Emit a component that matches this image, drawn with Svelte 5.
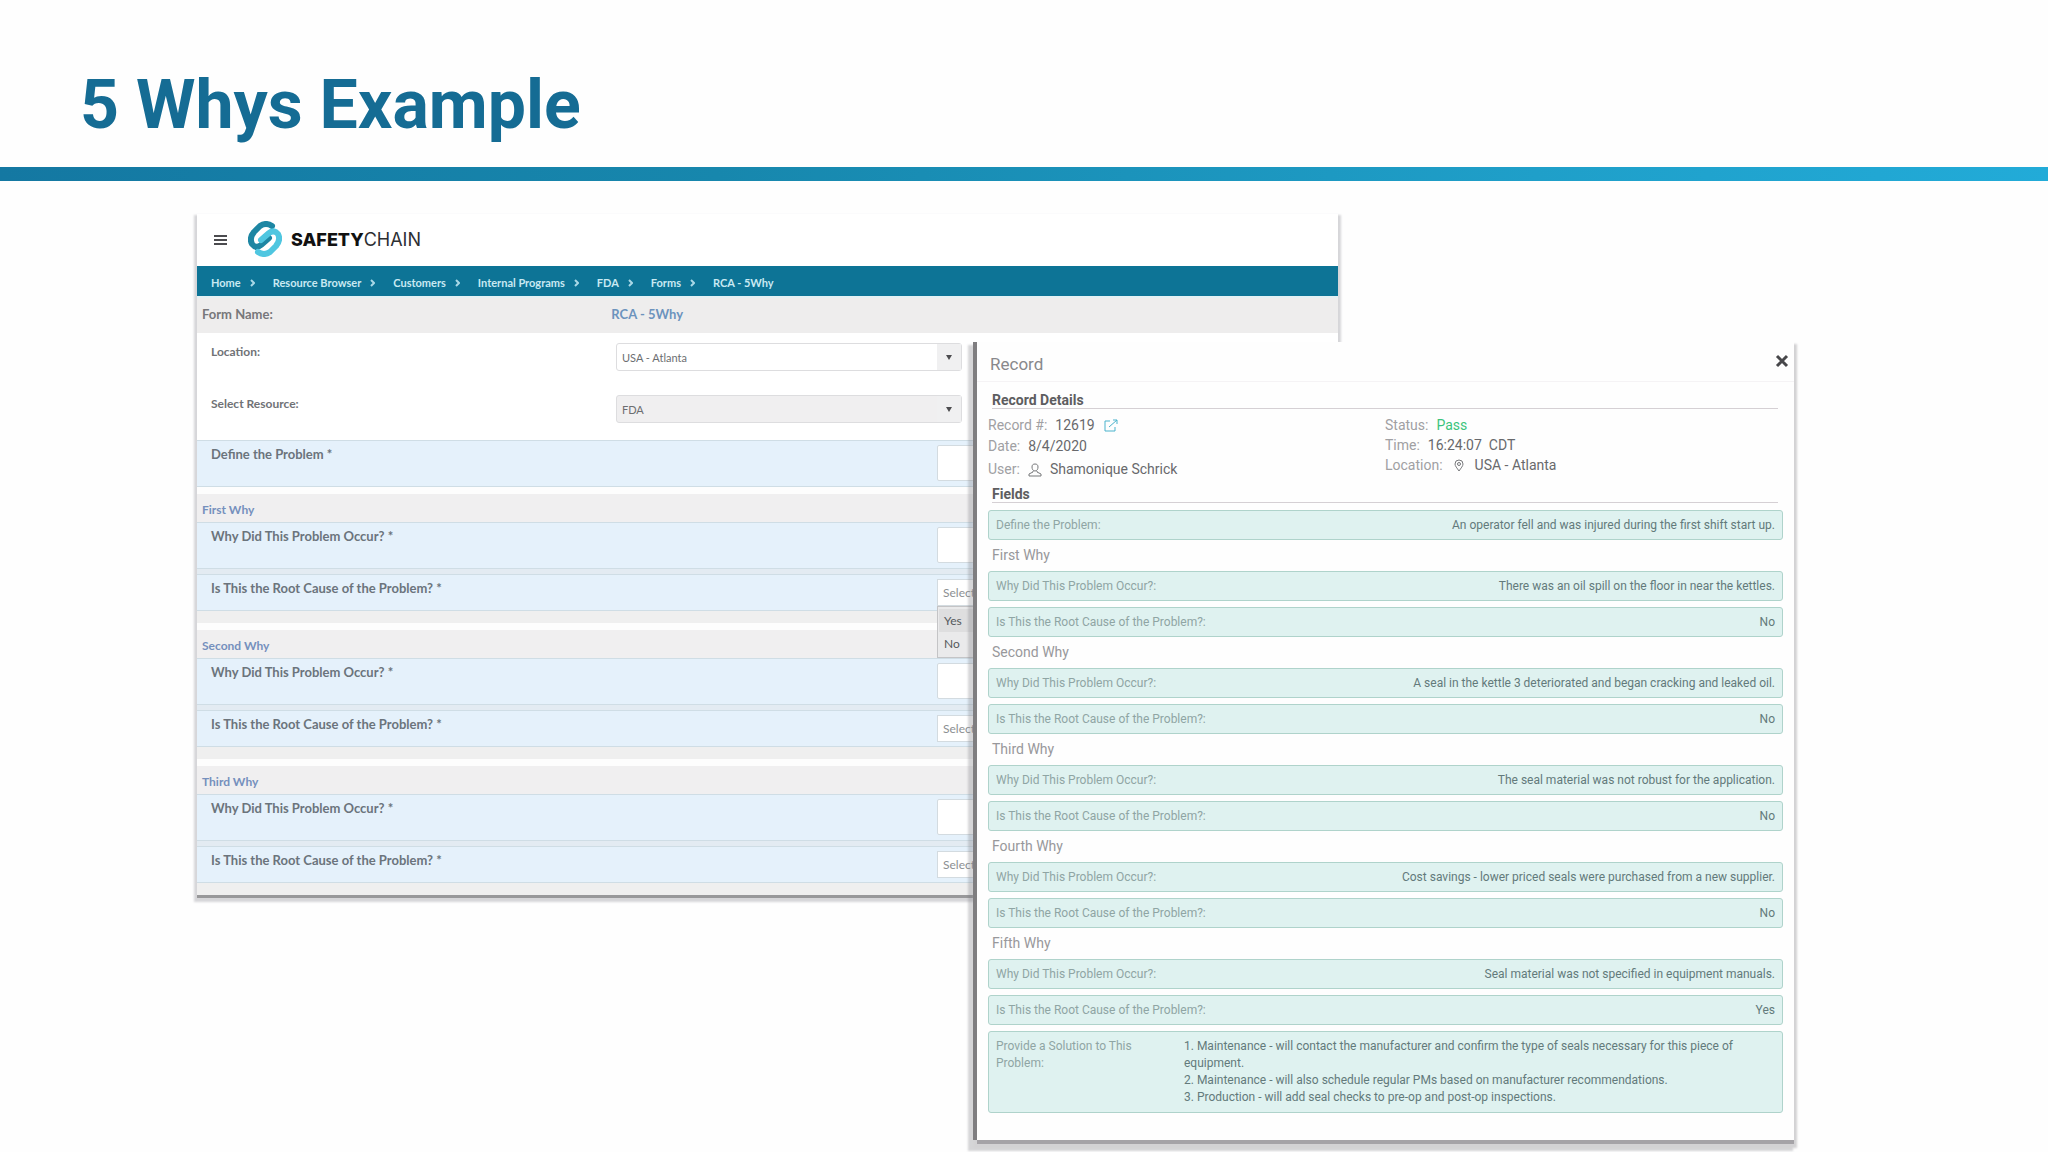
<script lang="ts">
    const crumbs = ['Home', 'Resource Browser', 'Customers', 'Internal Programs', 'FDA', 'Forms', 'RCA - 5Why'];

    const whys = [
        { title: 'First Why', open: true },
        { title: 'Second Why', open: false },
        { title: 'Third Why', open: false },
    ];

    const answers = [
        { title: 'First Why', reason: 'There was an oil spill on the floor in near the kettles.', root: 'No' },
        { title: 'Second Why', reason: 'A seal in the kettle 3 deteriorated and began cracking and leaked oil.', root: 'No' },
        { title: 'Third Why', reason: 'The seal material was not robust for the application.', root: 'No' },
        { title: 'Fourth Why', reason: 'Cost savings - lower priced seals were purchased from a new supplier.', root: 'No' },
        { title: 'Fifth Why', reason: 'Seal material was not specified in equipment manuals.', root: 'Yes' },
    ];
</script>

<main class="slide">
    <h1>5 Whys Example</h1>
    <div class="rule"></div>

    <div class="stage">
        <section class="form-panel">
            <header class="brand">
                <button class="menu" aria-label="Menu"><span></span><span></span><span></span></button>
                <svg class="logo" viewBox="0 0 34 36" fill="none" stroke-width="6" stroke-linecap="round" stroke-linejoin="round" aria-hidden="true">
                    <path stroke="#1d86a3" d="M24 5 Q18 1 12 5 L6 11 Q1 17 4 23 Q8 28 13 24 L21 17" />
                    <path stroke="#4fc6e0" d="M10 31 Q16 35 22 31 L28 25 Q33 19 30 13 Q26 8 21 12 L13 19" />
                </svg>
                <span class="wordmark"><b>SAFETY</b>CHAIN</span>
            </header>

            <nav aria-label="Breadcrumb">
                {#each crumbs as crumb, i}
                    <a href="#{i}">{crumb}</a>
                    {#if i < crumbs.length - 1}
                        <svg class="chevron" viewBox="0 0 5 8" aria-hidden="true"><path d="M1 1l3 3-3 3" /></svg>
                    {/if}
                {/each}
            </nav>

            <div class="form-name">
                <span>Form Name:</span>
                <a href="#form">RCA - 5Why</a>
            </div>

            <div class="pickers">
                <div class="picker">
                    <label for="location">Location:</label>
                    <div class="combo">
                        <select id="location"><option>USA - Atlanta</option></select>
                        <span class="arrow"></span>
                    </div>
                </div>
                <div class="picker">
                    <label for="resource">Select Resource:</label>
                    <div class="combo filled">
                        <select id="resource"><option>FDA</option></select>
                        <span class="arrow"></span>
                    </div>
                </div>
            </div>

            <div class="question tall">
                <label for="problem">Define the Problem *</label>
                <textarea id="problem"></textarea>
            </div>

            {#each whys as why, i}
                <h2>{why.title}</h2>
                <div class="question tall">
                    <label for="why-{i}">Why Did This Problem Occur? *</label>
                    <textarea id="why-{i}"></textarea>
                </div>
                <div class="spacer"></div>
                <div class="question">
                    <label for="root-{i}">Is This the Root Cause of the Problem? *</label>
                    <div class="answer">
                        <select id="root-{i}"><option>Select</option></select>
                        {#if why.open}
                            <ul class="options">
                                <li class="active">Yes</li>
                                <li>No</li>
                            </ul>
                        {/if}
                    </div>
                </div>
                <div class="footer"></div>
            {/each}
        </section>

        <section class="record">
            <header>
                <h2>Record</h2>
                <button class="close" aria-label="Close">
                    <svg viewBox="0 0 14 14"><path d="M2 2l10 10M12 2L2 12" /></svg>
                </button>
            </header>

            <div class="body">
                <h3>Record Details</h3>
                <div class="details">
                    <div class="left">
                        <p>Record #: <b>12619</b>
                            <svg class="edit" viewBox="0 0 16 14" aria-hidden="true"><path d="M7 2H2v10h10V8M6 8l8-7M10 1h4v4" /></svg>
                        </p>
                        <p>Date: <b>8/4/2020</b></p>
                        <p>User:
                            <svg class="user" viewBox="0 0 14 14" aria-hidden="true"><path d="M7 1c2 0 3 1 3 3s-1 4-3 4-3-2-3-4 1-3 3-3zM5 8v1l-4 2v2h12v-2l-4-2V8" /></svg>
                            <b>Shamonique Schrick</b>
                        </p>
                    </div>
                    <div class="right">
                        <p>Status: <b class="pass">Pass</b></p>
                        <p>Time: <b>16:24:07&nbsp; CDT</b></p>
                        <p>Location:
                            <svg class="pin" viewBox="0 0 10 13" aria-hidden="true"><path d="M5 12C3 9 1 7 1 5a4 4 0 0 1 8 0c0 2-2 4-4 7z" /><circle cx="5" cy="5" r="1.5" /></svg>
                            <b>USA - Atlanta</b>
                        </p>
                    </div>
                </div>

                <h3>Fields</h3>
                <div class="fields">
                    <div class="field">
                        <span>Define the Problem:</span>
                        <b>An operator fell and was injured during the first shift start up.</b>
                    </div>
                    {#each answers as answer}
                        <h4>{answer.title}</h4>
                        <div class="field">
                            <span>Why Did This Problem Occur?:</span>
                            <b>{answer.reason}</b>
                        </div>
                        <div class="field">
                            <span>Is This the Root Cause of the Problem?:</span>
                            <b>{answer.root}</b>
                        </div>
                    {/each}
                    <div class="field solution">
                        <span>Provide a Solution to This Problem:</span>
                        <div>
                            1. Maintenance - will contact the manufacturer and confirm the type of seals necessary for this piece of equipment.<br />
                            2. Maintenance - will also schedule regular PMs based on manufacturer recommendations.<br />
                            3. Production - will add seal checks to pre-op and post-op inspections.
                        </div>
                    </div>
                </div>
            </div>
        </section>
    </div>
</main>

<style>
    :global(body) {
        margin: 0;
        background: #fefefe;
    }
    .slide, .slide * {
        box-sizing: border-box;
    }
    .slide {
        font-family: Roboto, "Liberation Sans", sans-serif;
        color: #55595c;
    }
    h1 {
        margin: 0;
        padding: 65px 80px 22px;
        font-size: 68px;
        line-height: 80px;
        font-weight: 700;
        color: #156c94;
    }
    .rule {
        height: 14px;
        background: linear-gradient(90deg, #1478a2, #1787ad 35%, #1f9fc9 75%, #22abd8);
    }
    h2, h3, h4, p {
        margin: 0;
    }
    a {
        color: inherit;
        text-decoration: none;
    }

    /* both windows share the middle column so the record overlaps the form */
    .stage {
        display: grid;
        grid-template-columns: minmax(0, 197fr) minmax(0, 780fr) minmax(0, 361fr) minmax(0, 456fr) minmax(0, 254fr);
        grid-template-rows: 128px auto;
        padding: 33px 0 12px;
    }
    .form-panel {
        grid-column: 2 / 4;
        grid-row: 1 / 3;
        align-self: start;
        background: #fff;
        box-shadow: 0 3px 0 #98989a, 0 4px 2px 3px #d6d6d9;
        font-family: Lato, "Noto Sans", sans-serif;
    }
    .brand {
        display: flex;
        align-items: center;
        height: 52px;
        padding: 0 17px;
        background: #fff;
    }
    .menu {
        display: flex;
        flex-direction: column;
        gap: 2px;
        width: 13px;
        margin-right: 21px;
        padding: 0;
        border: 0;
        background: none;
    }
    .menu span {
        height: 2px;
        background: #4c4c4f;
    }
    .logo {
        width: 34px;
        height: 36px;
        margin: 0 9px 2px 0;
    }
    .wordmark {
        font-family: Inter, sans-serif;
        font-size: 18px;
        line-height: 20px;
        color: #2d2f33;
    }
    .wordmark b {
        font-weight: 800;
        color: #111;
    }
    nav {
        display: flex;
        align-items: center;
        height: 30px;
        padding: 3px 14px 0;
        background: #0d7496;
        color: #c9e9f2;
        font-size: 11px;
        font-weight: 700;
    }
    .chevron {
        width: 5px;
        height: 8px;
        margin: 0 18px 0 9px;
        fill: none;
        stroke: #a9d8e6;
        stroke-width: 2;
    }
    .form-name {
        display: grid;
        grid-template-columns: 409fr 721fr;
        height: 37px;
        padding: 8px 5px;
        border-top: 2px solid #e3f1f4;
        background: #eeeded;
        font-size: 13px;
        line-height: 16px;
        font-weight: 700;
        color: #77777a;
    }
    .form-name a {
        color: #6c93bd;
    }
    .pickers {
        display: grid;
        gap: 24px;
        padding: 10px 14px 17px;
        background: #fff;
    }
    .picker {
        display: grid;
        grid-template-columns: minmax(0, 405fr) minmax(0, 346fr) minmax(0, 362fr);
        font-size: 12px;
        color: #707276;
    }
    .picker label {
        font-weight: 700;
        line-height: 18px;
    }
    .combo {
        display: flex;
        height: 28px;
        border: 1px solid #dddddf;
        border-radius: 3px;
        background: #fff;
    }
    .combo select {
        flex: 1;
        padding: 1px 5px 0;
        border: 0;
        background: none;
        appearance: none;
        font: 11px Lato, sans-serif;
        color: #6c6e71;
    }
    .arrow {
        display: grid;
        place-items: center;
        width: 24px;
        background: #f0f0f1;
    }
    .arrow::after {
        content: "";
        border: 3px solid transparent;
        border-top: 5px solid #4c4c4f;
        border-bottom: 0;
    }
    .filled {
        background: #f0eff0;
    }
    .form-panel h2 {
        height: 35px;
        padding: 9px 5px 0;
        border-top: 7px solid #fdfdfd;
        background: #f0eff0;
        font-size: 12px;
        line-height: 14px;
        font-weight: 700;
        color: #7590bd;
    }
    .question {
        display: grid;
        grid-template-columns: minmax(0, 726fr) minmax(0, 387fr);
        height: 37px;
        padding: 4px 14px 0;
        border: solid #cfdde5;
        border-width: 1px 0;
        background: #e5f1fb;
    }
    .question label {
        font-size: 13px;
        line-height: 18px;
        font-weight: 700;
        color: #6b747c;
    }
    .tall {
        height: 47px;
    }
    .question textarea {
        height: 36px;
        border: 1px solid #d3dbe0;
        border-radius: 2px;
        resize: none;
        background: #fff;
    }
    .spacer {
        height: 5px;
        background: #e3ebf2;
    }
    .answer {
        position: relative;
    }
    .answer select {
        width: 100%;
        height: 27px;
        padding: 0 5px;
        border: 1px solid #d3dbe0;
        background: #fff;
        appearance: none;
        font: 12px Lato, sans-serif;
        color: #8c8f92;
    }
    .options {
        position: absolute;
        top: 27px;
        left: 0;
        width: 100%;
        margin: 0;
        padding: 2px 1px;
        border: 1px solid #c4c4c6;
        background: #eaeaeb;
        list-style: none;
        font-size: 12px;
        line-height: 23px;
    }
    .options li {
        padding: 0 5px;
    }
    .options .active {
        background: #dededf;
    }
    .footer {
        height: 12px;
        background: #efefef;
    }

    .record {
        grid-column: 3 / 5;
        grid-row: 2;
        z-index: 1;
        background: #fefefe;
        box-shadow: -4px 0 0 #7f7e80, 0 4px 0 #a5a3a7, 0 5px 2px 3px #d3d2d4, -5px 7px 2px 4px rgba(120, 120, 125, 0.3);
    }
    .record > header {
        display: flex;
        justify-content: space-between;
        height: 40px;
        padding: 12px 5px 0 13px;
        border-bottom: 1px solid #f5f3f5;
    }
    .record h2 {
        font-size: 17px;
        line-height: 20px;
        font-weight: 400;
        color: #88888b;
    }
    .close {
        width: 14px;
        height: 14px;
        padding: 0;
        border: 0;
        background: none;
    }
    .close svg {
        display: block;
        fill: none;
        stroke: #47474a;
        stroke-width: 3;
    }
    .body {
        padding: 10px 11px 27px;
    }
    h3 {
        height: 17px;
        margin: 0 5px 0 4px;
        border-bottom: 1px solid #d5d0d4;
        font-size: 14px;
        line-height: 16px;
        font-weight: 700;
        color: #5d5d60;
    }
    .details {
        display: grid;
        grid-template-columns: minmax(0, 397fr) minmax(0, 398fr);
        height: 77px;
        padding-top: 6px;
        font-size: 14px;
        line-height: 21px;
        color: #a0a0a3;
    }
    .details p {
        display: flex;
        align-items: center;
        gap: 8px;
    }
    .details b, .field b {
        font-weight: 400;
        color: #68696c;
    }
    .details .pass {
        color: #3cc47c;
    }
    .details svg {
        fill: none;
        stroke: #77787b;
    }
    .left p:last-child {
        padding-top: 2px;
    }
    .right {
        line-height: 20px;
    }
    .edit {
        width: 16px;
        height: 14px;
    }
    .details .edit path {
        stroke: #4bb3cc;
    }
    .user {
        width: 14px;
        height: 14px;
    }
    .pin {
        width: 10px;
        height: 13px;
        margin: 0 3px;
    }
    .fields {
        display: grid;
        gap: 6px;
        padding-top: 7px;
        font-size: 12px;
    }
    h4 {
        height: 19px;
        padding: 0 4px;
        font-size: 14px;
        line-height: 18px;
        font-weight: 400;
        color: #98989b;
    }
    .field {
        display: flex;
        justify-content: space-between;
        padding: 6px 7px 5px;
        border: 1px solid #afd3cb;
        border-radius: 3px;
        background: #dff2f0;
        line-height: 17px;
        color: #8fa5a4;
    }
    .field b {
        color: #637a7b;
    }
    .solution {
        display: grid;
        grid-template-columns: minmax(0, 188fr) minmax(0, 591fr);
        padding: 6px 7px;
    }
    .solution span {
        padding-right: 40px;
    }
    .solution div {
        color: #637a7b;
    }
</style>
